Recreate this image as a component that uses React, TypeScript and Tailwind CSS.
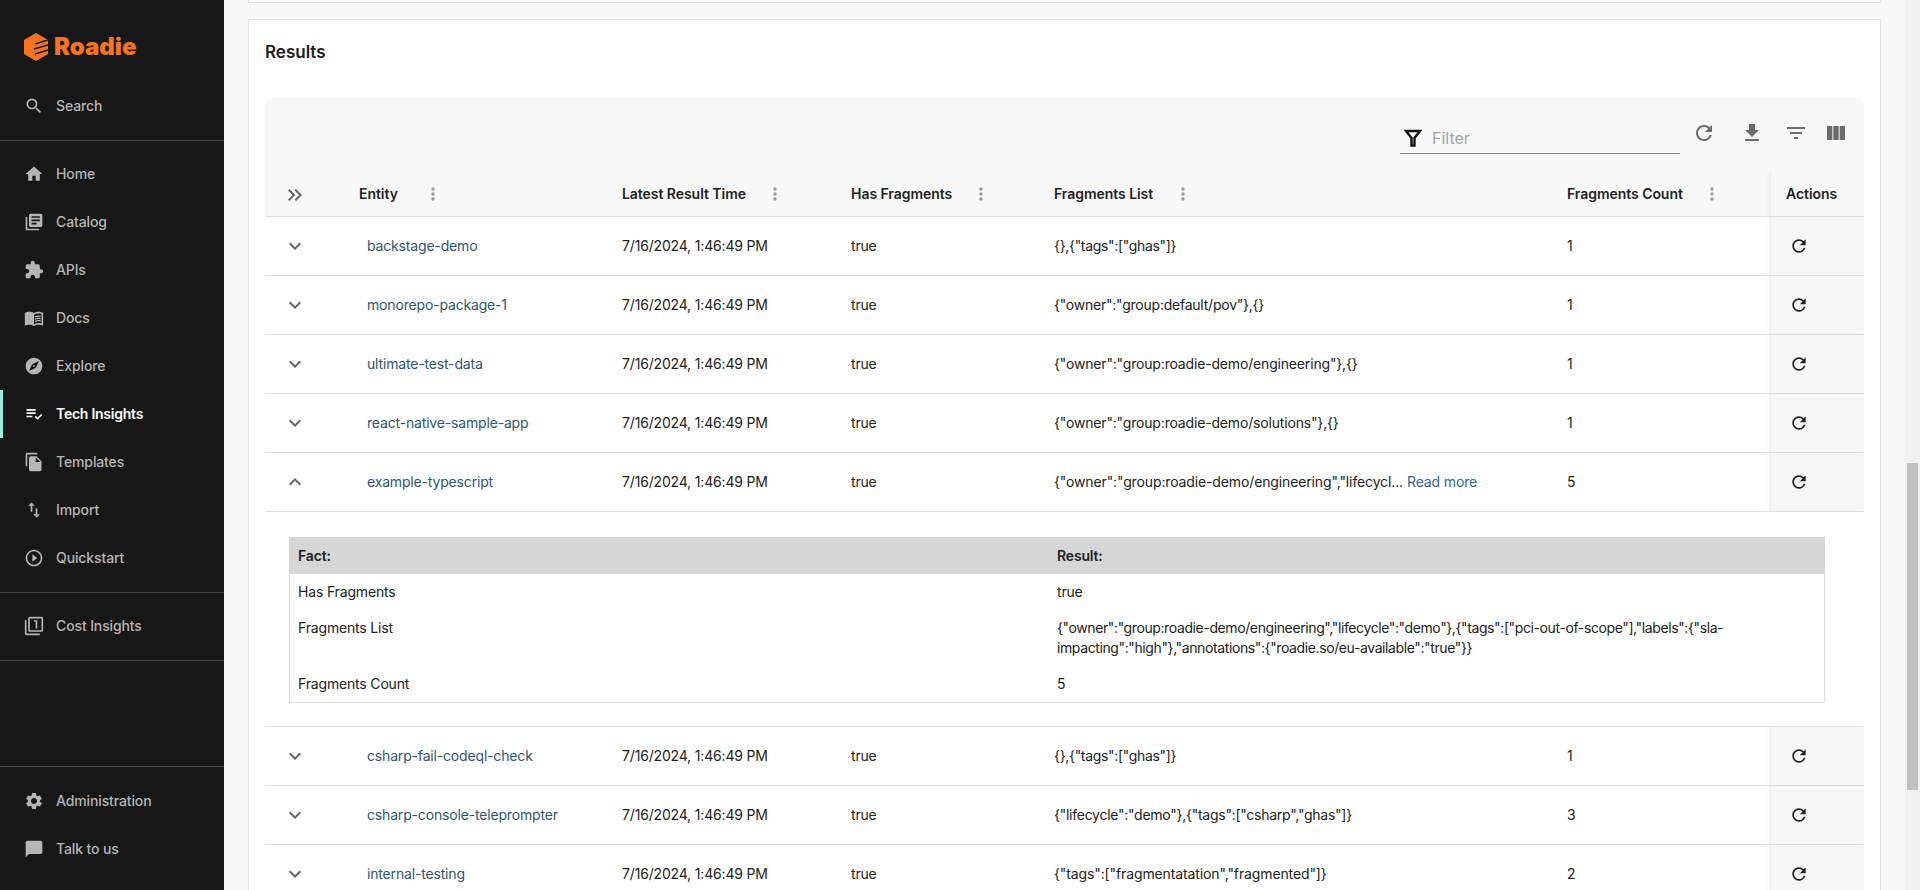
import {
  MdSearch, MdHome, MdLibraryBooks, MdExtension, MdMenuBook, MdExplore, MdPlaylistAddCheck, MdFileCopy,
  MdImportExport, MdPlayCircleOutline, MdFilter1, MdSettings, MdChatBubble, MdRefresh, MdGetApp, MdFilterList,
  MdViewColumn, MdKeyboardArrowDown, MdKeyboardArrowUp, MdKeyboardDoubleArrowRight, MdMoreVert,
} from 'react-icons/md';
import type { IconType } from 'react-icons';

const font = { fontFamily: 'Inter, sans-serif' };

function NavItem({ icon: Icon, label, active }: { icon: IconType; label: string; active?: boolean }) {
  return (
    <div className={`flex h-12 items-center text-sm ${active ? 'border-l-[3px] border-[#9bf0e1] pl-[21px] font-semibold tracking-[-0.25px] text-white' : 'pl-6 font-medium tracking-[-0.12px] text-[#b5b5b5]'}`}>
      <Icon className="h-5 w-5 shrink-0" />
      <span className="ml-3">{label}</span>
    </div>
  );
}

function Logo() {
  return (
    <div className="flex h-[82px] items-center pl-6 pt-[12px]">
      <svg viewBox="0 0 24 28" className="h-7 w-6">
        <path d="M12 0 24 7V21L12 28 0 21V7Z" fill="#f6741f" />
        <path d="M11 11 24 7M10 16 24 12M11 21 24 17" stroke="#171717" strokeWidth="1.6" fill="none" />
      </svg>
      <span className="ml-[6px] text-[24px] font-black leading-none text-[#f6741f]">Roadie</span>
    </div>
  );
}

function Sidebar() {
  return (
    <nav className="flex h-full w-56 shrink-0 flex-col bg-[#171717]">
      <Logo />
      <NavItem icon={MdSearch} label="Search" />
      <div className="mt-[10px] border-t border-[#444]" />
      <div className="mt-[9px]">
        <NavItem icon={MdHome} label="Home" />
        <NavItem icon={MdLibraryBooks} label="Catalog" />
        <NavItem icon={MdExtension} label="APIs" />
        <NavItem icon={MdMenuBook} label="Docs" />
        <NavItem icon={MdExplore} label="Explore" />
        <NavItem icon={MdPlaylistAddCheck} label="Tech Insights" active />
        <NavItem icon={MdFileCopy} label="Templates" />
        <NavItem icon={MdImportExport} label="Import" />
        <NavItem icon={MdPlayCircleOutline} label="Quickstart" />
      </div>
      <div className="mt-[10px] border-t border-[#444]" />
      <div className="mt-[9px]">
        <NavItem icon={MdFilter1} label="Cost Insights" />
      </div>
      <div className="mt-[10px] border-t border-[#444]" />
      <div className="flex-1" />
      <div className="border-t border-[#444]" />
      <div className="mb-[17px] mt-[10px]">
        <NavItem icon={MdSettings} label="Administration" />
        <NavItem icon={MdChatBubble} label="Talk to us" />
      </div>
    </nav>
  );
}

const widths = ['w-[95px]', 'w-[262px]', 'w-[229px]', 'w-[203px]', 'w-[513px]', 'w-[203px]'];

function HeaderCell({ label, width, kebab }: { label: string; width: string; kebab: string }) {
  return (
    <div className={`flex shrink-0 items-center ${width}`}>
      <span className="text-sm font-semibold tracking-[-0.05px] text-[#222]">{label}</span>
      <MdMoreVert className={`h-5 w-5 text-[#999] ${kebab}`} />
    </div>
  );
}

function ActionCell({ header }: { header?: boolean }) {
  return (
    <div className={`flex h-full flex-1 items-center border-l border-[#ececec] bg-[#f7f7f7] shadow-[-2px_0_3px_rgba(0,0,0,0.03)] ${header ? 'pl-[15px]' : 'pl-[18px]'}`}>
      {header ? (
        <span className="text-sm font-semibold tracking-[-0.05px] text-[#222]">Actions</span>
      ) : (
        <MdRefresh className="h-5 w-5 text-[#222]" />
      )}
    </div>
  );
}

type RowProps = { entity: string; fragments: string; count: string; track: string; open?: boolean; more?: boolean };

function Row({ entity, fragments, count, track, open, more }: RowProps) {
  const Chevron = open ? MdKeyboardArrowUp : MdKeyboardArrowDown;
  return (
    <div className="flex h-[59px] items-center border-b border-[#e0e0e0] bg-white text-sm tracking-[-0.17px] text-[#222]">
      <div className={`shrink-0 pl-[18px] ${widths[0]}`}>
        <Chevron className="h-6 w-6 text-[#666]" />
      </div>
      <div className={`shrink-0 pl-[7px] text-[#2f5673] ${widths[1]}`}>{entity}</div>
      <div className={`shrink-0 ${widths[2]}`}>7/16/2024, 1:46:49 PM</div>
      <div className={`shrink-0 ${widths[3]}`}>true</div>
      <div className={`shrink-0 ${widths[4]} ${track}`}>
        {fragments}
        {more && <span className="ml-1 text-[#2d6a8f]">Read more</span>}
      </div>
      <div className={`shrink-0 ${widths[5]}`}>{count}</div>
      <ActionCell />
    </div>
  );
}

function Detail() {
  return (
    <div className="border-b border-[#e0e0e0] bg-white px-6 pb-[23px] pt-[25px]">
      <div className="mr-[15px] border border-t-0 border-[#ddd] text-sm tracking-[-0.17px] text-[#222]">
        <div className="-mx-px flex h-[37px] items-center bg-[#d6d6d6] font-semibold">
          <div className="w-[760px] shrink-0 pl-[9px]">Fact:</div>
          <div className="pl-[8px]">Result:</div>
        </div>
        <div className="flex h-[36px] items-center">
          <div className="w-[760px] shrink-0 pl-2">Has Fragments</div>
          <div className="pl-[7px]">true</div>
        </div>
        <div className="flex py-2 leading-5">
          <div className="w-[760px] shrink-0 pl-2">Fragments List</div>
          <div className="w-[750px] pl-[7px] tracking-[-0.39px] [overflow-wrap:anywhere]">
            {'{"owner":"group:roadie-demo/engineering","lifecycle":"demo"},{"tags":["pci-out-of-scope"],"labels":{"sla-impacting":"high"},"annotations":{"roadie.so/eu-available":"true"}}'}
          </div>
        </div>
        <div className="flex h-[36px] items-center">
          <div className="w-[760px] shrink-0 pl-2">Fragments Count</div>
          <div className="pl-[7px]">5</div>
        </div>
      </div>
    </div>
  );
}

function Toolbar() {
  return (
    <div className="flex h-[74px] items-start rounded-t-lg bg-[#f8f8f8] pl-[1135px] pt-[23px]">
      <div className="flex h-[33px] w-[280px] shrink-0 items-center border-b border-[#8a8a8a] pt-[2px]">
        <svg viewBox="0 0 24 24" className="ml-[1px] h-6 w-6 text-[#111]" fill="none" stroke="currentColor" strokeWidth="2.4">
          <path d="M5 5h14l-5.5 7v7.5h-3V12Z" />
        </svg>
        <span className="ml-[7px] text-base text-[#a3a3a3]">Filter</span>
      </div>
      <div className="ml-[12px] flex text-[#6b6b6b]">
        <MdRefresh className="h-6 w-6" />
        <MdGetApp className="ml-[24px] h-6 w-6" />
        <MdFilterList className="ml-[20px] h-6 w-6" />
        <MdViewColumn className="ml-[16px] h-6 w-6" />
      </div>
    </div>
  );
}

function Results() {
  return (
    <section className="mt-4 border border-[#e4e4e4] bg-white px-4 pt-[16px]">
      <h2 className="h-[62px] pt-[1px] text-[17px] font-semibold leading-[30px] text-[#222]">Results</h2>
      <Toolbar />
      <div className="flex h-[45px] items-center border-b border-[#e0e0e0] bg-[#f8f8f8]">
        <div className="w-[94px] shrink-0 pl-[18px]">
          <MdKeyboardDoubleArrowRight className="mt-[2px] h-6 w-6 text-[#666]" />
        </div>
        <HeaderCell label="Entity" width="w-[263px]" kebab="ml-[25px]" />
        <HeaderCell label="Latest Result Time" width={widths[2]} kebab="ml-[19px]" />
        <HeaderCell label="Has Fragments" width={widths[3]} kebab="ml-[19px]" />
        <HeaderCell label="Fragments List" width={widths[4]} kebab="ml-[20px]" />
        <HeaderCell label="Fragments Count" width={widths[5]} kebab="ml-[19px]" />
        <ActionCell header />
      </div>
      <Row entity="backstage-demo" fragments={'{},{"tags":["ghas"]}'} count="1" track="tracking-[-0.32px]" />
      <Row entity="monorepo-package-1" fragments={'{"owner":"group:default/pov"},{}'} count="1" track="tracking-[-0.23px]" />
      <Row entity="ultimate-test-data" fragments={'{"owner":"group:roadie-demo/engineering"},{}'} count="1" track="tracking-[-0.17px]" />
      <Row entity="react-native-sample-app" fragments={'{"owner":"group:roadie-demo/solutions"},{}'} count="1" track="tracking-[-0.17px]" />
      <Row entity="example-typescript" fragments={'{"owner":"group:roadie-demo/engineering","lifecycl...'} count="5" track="tracking-[-0.13px]" open more />
      <Detail />
      <Row entity="csharp-fail-codeql-check" fragments={'{},{"tags":["ghas"]}'} count="1" track="tracking-[-0.32px]" />
      <Row entity="csharp-console-teleprompter" fragments={'{"lifecycle":"demo"},{"tags":["csharp","ghas"]}'} count="3" track="tracking-[-0.26px]" />
      <Row entity="internal-testing" fragments={'{"tags":["fragmentatation","fragmented"]}'} count="2" track="tracking-[-0.12px]" />
    </section>
  );
}

export default function App() {
  return (
    <div className="flex h-[890px] w-[1920px] overflow-hidden bg-[#f8f8f8]" style={font}>
      <Sidebar />
      <main className="h-full flex-1 overflow-hidden pl-6 pr-6">
        <div className="h-[3px] border border-t-0 border-[#e4e4e4] bg-white" />
        <Results />
      </main>
      <div className="h-full w-[15px] shrink-0 bg-[#f1f1f1] pl-[2px] pt-[463px]">
        <div className="h-[327px] w-[11px] bg-[#c1c1c1]" />
      </div>
    </div>
  );
}
